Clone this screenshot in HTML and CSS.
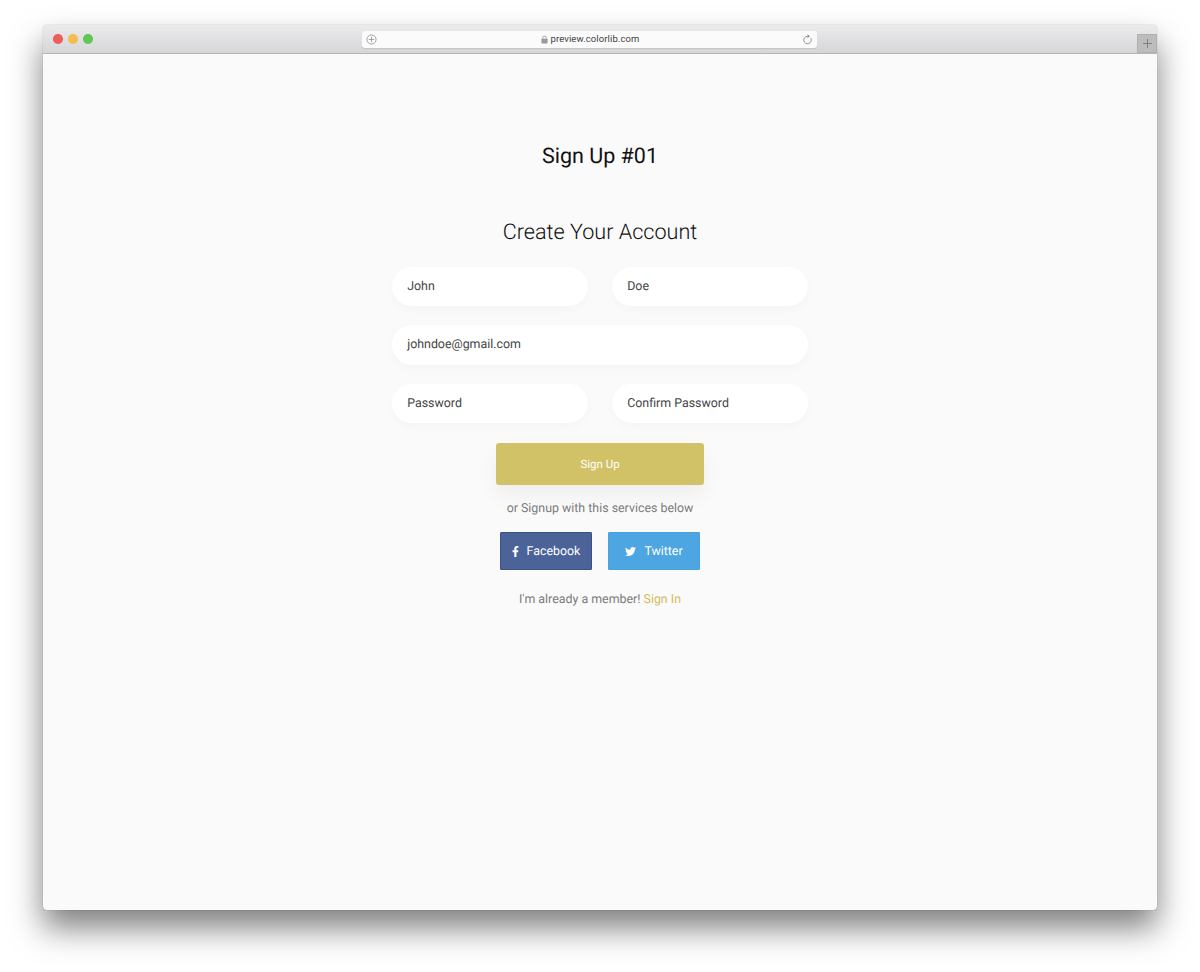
FILE: index.html
```html
<!DOCTYPE html>
<html lang="en">
<head>
<meta charset="utf-8">
<title>Sign Up #01</title>
<link rel="stylesheet" href="styles.css">
</head>
<body>
<div class="window">
  <header class="titlebar">
    <div class="lights">
      <span class="light red"></span>
      <span class="light yellow"></span>
      <span class="light green"></span>
    </div>
    <div class="address">
      <svg class="addr-plus" viewBox="0 0 12 12" width="11" height="11"><circle cx="6" cy="6" r="5" fill="none" stroke="#999" stroke-width="1"/><path d="M6 3v6M3 6h6" stroke="#999" stroke-width="1"/></svg>
      <div class="url">
        <svg class="lock" viewBox="0 0 8 10" width="7" height="9"><path d="M2 4.500V3a2 2 0 0 1 4 0v1.500" fill="none" stroke="#9a9a9a" stroke-width="1"/><rect x="0.500" y="4" width="7" height="5.500" rx="0.800" fill="#9a9a9a"/></svg>
        <span>preview.colorlib.com</span>
      </div>
      <svg class="reload" viewBox="0 0 12 12" width="11" height="11"><path d="M6 2.500A4.100 4.100 0 1 0 9.600 4.600" fill="none" stroke="#8a8a8a" stroke-width="1"/><path d="M6 .3l2.600 2.200L6 4.700z" fill="#8a8a8a"/></svg>
    </div>
    <div class="newtab"><svg viewBox="0 0 10 10" width="9" height="9"><path d="M5 0v10M0 5h10" stroke="#777" stroke-width="1"/></svg></div>
  </header>
  <main class="page">
    <h1 class="title">Sign Up #01</h1>
    <h2 class="subtitle">Create Your Account</h2>
    <form class="form">
      <div class="row">
        <div class="field">John</div>
        <div class="field">Doe</div>
      </div>
      <div class="row">
        <div class="field">johndoe@gmail.com</div>
      </div>
      <div class="row">
        <div class="field">Password</div>
        <div class="field">Confirm Password</div>
      </div>
      <button class="submit" type="button">Sign Up</button>
      <p class="or">or Signup with this services below</p>
      <div class="social">
        <a class="sbtn fb">
          <svg viewBox="0 0 320 512" width="7" height="11"><path fill="#fff" d="M279 288l14-93h-89v-60c0-25 12-50 52-50h41V6s-37-6-72-6c-73 0-121 44-121 125v70H23v93h81v224h100V288z"/></svg>
          <span>Facebook</span>
        </a>
        <a class="sbtn tw">
          <svg viewBox="0 0 512 512" width="11" height="11"><path fill="#fff" d="M459 152c.3 4.500.3 9 .3 13.500 0 139-106 299-299 299-59 0-115-17-161-47 8 1 16 1 25 1 49 0 94-17 130-45-46-1-85-31-98-73 7 1 13 2 20 2 9 0 19-1 28-4-48-10-84-52-84-103v-1c14 8 30 13 47 13-28-19-47-51-47-87 0-19 5-37 14-53 52 64 130 106 217 110-2-8-3-16-3-24 0-58 47-105 105-105 30 0 58 13 77 33 24-5 47-14 67-26-8 25-25 46-46 58 21-2 42-8 60-16-14 21-32 39-52 54z"/></svg>
          <span>Twitter</span>
        </a>
      </div>
      <p class="member">I'm already a member! <a class="signin">Sign In</a></p>
    </form>
  </main>
</div>
</body>
</html>
```
FILE: styles.css
```css
* { box-sizing: border-box; }
html, body { margin: 0; height: 100%; }
body {
  background: #fff;
  padding: 25px 43px 62px;
  height: 972px;
  overflow: hidden;
  font-family: Roboto, "Liberation Sans", sans-serif;
  text-rendering: geometricPrecision;
}
.window {
  height: 885px;
  display: flex;
  flex-direction: column;
  border-radius: 4px;
  background: #fafafa;
  box-shadow: 0 0 1px rgba(0,0,0,.45), 0 18px 32px rgba(0,0,0,.5);
}
.titlebar {
  height: 29px;
  flex: none;
  display: flex;
  align-items: center;
  position: relative;
  background: linear-gradient(#ebebed, #d6d6d8);
  border-bottom: 1px solid #b5b5b5;
  border-radius: 4px 4px 0 0;
  padding: 0 0 0 10px;
}
.lights { display: flex; gap: 5.500px; width: 309px; flex: none; }
.light { width: 9.500px; height: 9.500px; border-radius: 50%; }
.red { background: #ee5f5b; }
.yellow { background: #f5bd4f; }
.green { background: #5fc854; }
.address {
  width: 455px;
  height: 17px;
  margin-top: 1px;
  display: flex;
  align-items: center;
  justify-content: space-between;
  padding: 0 4px;
  background: #fbfbfb;
  border-radius: 3px;
  box-shadow: 0 1px 1px rgba(0,0,0,.1);
}
.addr-plus, .reload { flex: none; }
.url {
  display: flex;
  align-items: center;
  gap: 3px;
  font-size: 9.500px;
  color: #444;
  letter-spacing: .1px;
  margin-left: 1px;
}
.newtab {
  position: absolute;
  right: 0;
  top: 9px;
  width: 20px;
  height: 19px;
  background: #bcbcbc;
  border: 1px solid #b0b0b0;
  display: flex;
  align-items: center;
  justify-content: center;
}
.page {
  flex: 1;
  display: flex;
  flex-direction: column;
  align-items: center;
  border-radius: 0 0 4px 4px;
}
.title {
  margin: 88px 0 0;
  font-size: 21.500px;
  line-height: 29px;
  font-weight: 400;
  color: #111;
}
.subtitle {
  margin: 47px 0 0;
  font-size: 21.600px;
  line-height: 29px;
  font-weight: 300;
  color: #111;
}
.form {
  width: 416px;
  margin-top: 19.500px;
  display: flex;
  flex-direction: column;
  align-items: center;
}
.row {
  width: 100%;
  display: flex;
  gap: 24px;
  margin-bottom: 19.200px;
}
.field {
  flex: 1;
  height: 39.500px;
  border-radius: 20px;
  background: #fff;
  padding-left: 15.200px;
  display: flex;
  align-items: center;
  font-size: 12.400px;
  color: #444;
  box-shadow: 0 4px 10px rgba(0,0,0,.025);
}
.submit {
  width: 208px;
  height: 42px;
  border: 0;
  border-radius: 3px;
  background: #d2c267;
  color: #fff;
  font: 400 11.500px Roboto, "Liberation Sans", sans-serif;
  text-rendering: geometricPrecision;
  box-shadow: 0 10px 20px rgba(0,0,0,.05);
}
.or {
  margin: 15.500px 0 0;
  font-size: 12.400px;
  line-height: 18px;
  color: #7b7b7b;
}
.social {
  display: flex;
  gap: 16px;
  margin-top: 14px;
}
.sbtn {
  width: 92px;
  height: 38px;
  display: flex;
  align-items: center;
  justify-content: center;
  gap: 8px;
  color: #fff;
  font-size: 12.400px;
  border-radius: 1px;
}
.fb { background: #4b6398; border: 1px solid #3a5288; }
.tw { background: #4da6e2; border: 1px solid #48a0dc; }
.member {
  margin: 21px 0 0;
  font-size: 12.400px;
  line-height: 18px;
  color: #7b7b7b;
}
.signin { color: #d2bd5c; }
```
